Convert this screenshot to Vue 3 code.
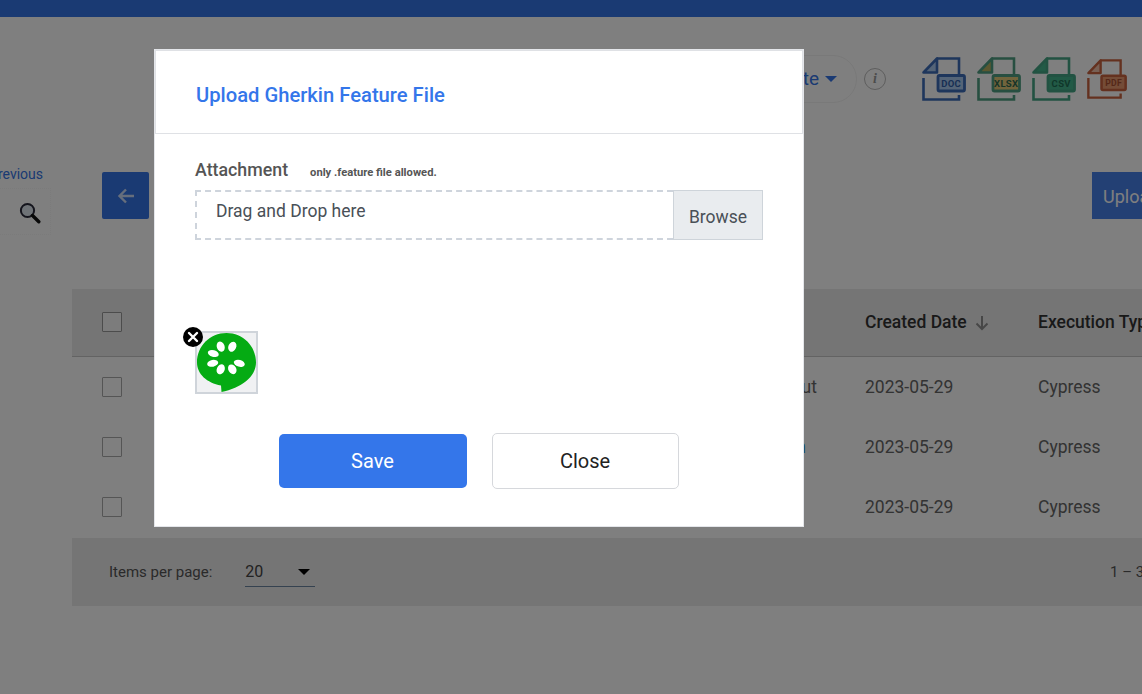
<template>
  <div class="page">
    <div class="topbar"><span class="topbar-text">Validations</span></div>

    <div class="toolbar">
      <div class="translate"><span class="translate-text">Translate</span> <span class="caret"></span></div>
      <span class="info">i</span>
      <div class="file-icons">
        <svg v-for="f in fileIcons" :key="f.label" class="file-icon" :class="f.cls" width="44" height="44" viewBox="0 0 44 44" fill="none">
          <path d="M15 1.5 H37 V18" :stroke="f.color" stroke-width="2.6" />
          <path d="M1.5 15.5 L15 1.5 V15.5 Z" :fill="f.fold" :stroke="f.color" stroke-width="2.6" stroke-linejoin="round" />
          <path d="M1.5 21 V42.5 H37 V38" :stroke="f.color" stroke-width="2.6" />
          <rect x="16" y="18.5" width="26.5" height="15.5" rx="1.5" :fill="f.fill" :stroke="f.color" stroke-width="2.8" />
          <text x="29.2" y="29.7" text-anchor="middle" class="file-label" :fill="f.text">{{ f.label }}</text>
        </svg>
      </div>
    </div>

    <div class="search-row">
      <div class="prev">
        <span class="prev-text">Previous</span>
        <div class="search-box">
          <svg class="search-icon" width="22" height="22" viewBox="0 0 22 22" fill="none">
            <circle cx="8.5" cy="8.5" r="6.6" fill="#dfe6ee" stroke="#2a2a3a" stroke-width="2" />
            <path d="M13.5 13.5 L19.8 19.8" stroke="#111" stroke-width="3.4" stroke-linecap="round" />
          </svg>
        </div>
      </div>
      <button class="back">
        <svg width="18" height="16" viewBox="0 0 18 16" fill="none">
          <path d="M9 1.5 L2.5 8 L9 14.5 M3 8 H17" stroke="#fff" stroke-width="2.4" opacity="0.75" />
        </svg>
      </button>
      <div class="spacer"></div>
      <button class="upload">Upload</button>
    </div>

    <div class="table">
      <div class="row head">
        <span class="check"></span>
        <span class="col-name"></span>
        <span class="col-date">
          Created Date
          <svg class="sort-arrow" width="14" height="16" viewBox="0 0 14 16" fill="none">
            <path d="M7 1 V14 M1.5 8.5 L7 14 L12.5 8.5" stroke="#8f8f8f" stroke-width="2" />
          </svg>
        </span>
        <span class="col-type">Execution Type</span>
      </div>
      <div v-for="(r, i) in rows" :key="i" class="row">
        <span class="check"></span>
        <span class="col-name" :class="r.cls">{{ r.name }}</span>
        <span class="col-date">{{ r.date }}</span>
        <span class="col-type">{{ r.type }}</span>
      </div>
      <div class="table-foot">
        <span class="per-page">Items per page:</span>
        <div class="per-select"><span>20</span><span class="select-caret"></span></div>
        <span class="range">1 – 3 of 3</span>
      </div>
    </div>

    <div class="overlay"></div>

    <div class="modal">
      <div class="modal-head">Upload Gherkin Feature File</div>
      <div class="modal-body">
        <div class="attach-label">
          <span class="attach-title">Attachment</span>
          <span class="attach-note">only .feature file allowed.</span>
        </div>
        <div class="drop">
          <div class="drop-zone">Drag and Drop here</div>
          <div class="browse">Browse</div>
        </div>
        <div class="thumb">
          <svg width="59" height="59" viewBox="0 0 59 59">
            <path d="M29.5 0C46 0 59 13 59 29.5C59 44 44 55 24.5 59L24 52.5C10 50 0 41 0 29.5C0 13 13 0 29.5 0Z" fill="#05ab13" />
            <g fill="#fff">
              <ellipse cx="23.7" cy="13.7" rx="3.9" ry="5.2" transform="rotate(-20 23.7 13.7)" />
              <ellipse cx="35.3" cy="13.7" rx="3.9" ry="5.2" transform="rotate(25 35.3 13.7)" />
              <ellipse cx="16.3" cy="20.5" rx="5.6" ry="3.4" transform="rotate(15 16.3 20.5)" />
              <ellipse cx="15.7" cy="30.3" rx="5.6" ry="3.4" transform="rotate(-12 15.7 30.3)" />
              <ellipse cx="42.3" cy="30.3" rx="5.6" ry="3.4" transform="rotate(15 42.3 30.3)" />
              <ellipse cx="23.7" cy="36.3" rx="3.9" ry="5.2" transform="rotate(25 23.7 36.3)" />
              <ellipse cx="35.3" cy="36.3" rx="3.9" ry="5.2" transform="rotate(-30 35.3 36.3)" />
            </g>
          </svg>
          <span class="remove">
            <svg width="20" height="20" viewBox="0 0 20 20">
              <circle cx="10" cy="10" r="10" fill="#000" />
              <path d="M6 6 L14 14 M14 6 L6 14" stroke="#fff" stroke-width="2.4" stroke-linecap="round" />
            </svg>
          </span>
        </div>
        <div class="actions">
          <button class="save">Save</button>
          <button class="close">Close</button>
        </div>
      </div>
    </div>
  </div>
</template>

<script setup>
const fileIcons = [
  { label: "DOC", color: "#3c6cb8", fold: "#a9c8ee", fill: "#a9c8ee", text: "#2f5ea8", cls: "" },
  { label: "XLSX", color: "#4f9f82", fold: "#b8b060", fill: "#e2c878", text: "#2f6a50", cls: "" },
  { label: "CSV", color: "#45a584", fold: "#45b58c", fill: "#45b58c", text: "#1f6f55", cls: "" },
  { label: "PDF", color: "#c9623f", fold: "#f0c0a8", fill: "#e8986f", text: "#a84f32", cls: "small" },
]

const rows = [
  { name: "Checkout", cls: "", date: "2023-05-29", type: "Cypress" },
  { name: "Login", cls: "link", date: "2023-05-29", type: "Cypress" },
  { name: "Search", cls: "hidden", date: "2023-05-29", type: "Cypress" },
]
</script>

<style>
html,
body {
  margin: 0;
  overflow: hidden;
}
</style>

<style scoped>
.page {
  position: relative;
  width: 1142px;
  height: 694px;
  overflow: hidden;
  background: #fff;
  font-family: Roboto, "Liberation Sans", sans-serif;
  color: #555;
}

.topbar {
  height: 17px;
  background: #3474e6;
  overflow: hidden;
}

.topbar-text {
  display: block;
  margin-top: -14px;
  font-size: 14px;
  line-height: 16px;
  font-weight: 500;
  color: #dfe8f8;
}

.toolbar {
  display: flex;
  align-items: center;
  height: 48px;
  margin-top: 38px;
  padding-left: 700px;
}

.translate {
  display: flex;
  align-items: center;
  justify-content: flex-end;
  gap: 6px;
  width: 157px;
  height: 48px;
  box-sizing: border-box;
  padding-right: 19px;
  border: 1px solid #f2f2f2;
  border-radius: 24px;
  font-size: 19px;
  color: #3474e6;
}

.translate-text {
  margin-bottom: 2px;
}

.caret {
  border-left: 6px solid transparent;
  border-right: 6px solid transparent;
  border-top: 6px solid #3474e6;
}

.info {
  width: 20px;
  height: 20px;
  margin-left: 7px;
  border: 1px solid #bbb;
  border-radius: 50%;
  font: italic 700 14px/20px "Liberation Serif", serif;
  text-align: center;
  color: #999;
}

.file-icons {
  display: flex;
  gap: 11px;
  margin-left: 36px;
  height: 44px;
  margin-top: -1px;
}

.file-icon {
  flex: none;
}

.file-icon.small {
  width: 40px;
  height: 40px;
  margin-top: 2px;
}

.file-label {
  font-size: 9.5px;
  font-weight: 700;
  font-family: Roboto, sans-serif;
  letter-spacing: 0.3px;
}

.search-row {
  display: flex;
  align-items: flex-start;
  height: 123px;
  margin-top: 63px;
}

.prev {
  display: flex;
  flex-direction: column;
  align-items: flex-end;
  flex: none;
  width: 51px;
  margin-right: 51px;
  overflow: hidden;
  white-space: nowrap;
  font-size: 14px;
  color: #3474e6;
}

.prev-text {
  flex: none;
  line-height: 16px;
  margin-right: 8px;
}

.search-box {
  display: flex;
  justify-content: flex-end;
  align-self: stretch;
  height: 47px;
  box-sizing: border-box;
  margin-top: 6px;
  border: 1px dotted #f6f6f6;
  border-left: none;
}

.search-icon {
  margin: 13px 9px 0 0;
}

.back {
  display: flex;
  align-items: center;
  justify-content: center;
  width: 47px;
  height: 47px;
  margin-top: 6px;
  padding: 0;
  border: none;
  border-radius: 2px;
  background: #3474e6;
}

.spacer {
  flex: 1;
}

.upload {
  width: 50px;
  height: 47px;
  margin-top: 6px;
  padding: 2px 0 0 11px;
  border: none;
  background: #3474e6;
  color: #fff;
  opacity: 0.9;
  font: 18px Roboto, sans-serif;
  text-align: left;
  overflow: hidden;
  white-space: nowrap;
}

.table {
  margin-left: 72px;
}

.row {
  display: flex;
  align-items: center;
  height: 60px;
  padding-left: 30px;
  font-size: 17.5px;
  color: #666;
}

.row.head {
  height: 68px;
  box-sizing: border-box;
  padding-bottom: 1px;
  background: #ebebeb;
  border-bottom: 1px solid #c6c6c6;
  font-weight: 500;
  color: #333;
}

.check {
  flex: none;
  width: 18px;
  height: 18px;
  border: 1px solid #aaa;
  border-radius: 1px;
}

.head .check {
  background: #f8f8f8;
  border-color: #999;
}

.col-name {
  flex: none;
  width: 743px;
  box-sizing: border-box;
  padding-right: 48px;
  text-align: right;
}

.col-name.link {
  padding-right: 59px;
  color: #2a8fd8;
}

.col-name.hidden {
  padding-right: 120px;
}

.col-date {
  display: flex;
  align-items: center;
  gap: 8px;
  flex: none;
  width: 173px;
}

.sort-arrow {
  flex: none;
  margin-top: 1px;
}

.col-type {
  flex: none;
  white-space: nowrap;
}

.table-foot {
  display: flex;
  align-items: center;
  height: 68px;
  margin-top: 1px;
  padding-left: 37px;
  background: #ebebeb;
  font-size: 15px;
  color: #555;
}

.per-select {
  display: flex;
  justify-content: space-between;
  align-items: center;
  width: 70px;
  height: 29px;
  box-sizing: border-box;
  margin-left: 33px;
  border-bottom: 1px solid #6a85a0;
  font-size: 16px;
  color: #444;
}

.select-caret {
  margin-right: 5px;
  border-left: 6px solid transparent;
  border-right: 6px solid transparent;
  border-top: 6px solid #000;
}

.range {
  margin-left: auto;
  width: 32px;
  white-space: nowrap;
}

.overlay {
  position: absolute;
  inset: 0;
  background: rgba(0, 0, 0, 0.5);
}

.modal {
  position: absolute;
  top: 49px;
  left: 154px;
  width: 650px;
  height: 478px;
  box-sizing: border-box;
  background: #fff;
  border: 1px solid #e4e6ea;
}

.modal-head {
  height: 84px;
  box-sizing: border-box;
  padding: 32px 0 0 40px;
  border: 1px solid #dfe1e5;
  font-size: 20.2px;
  font-weight: 500;
  line-height: 24px;
  color: #3476ea;
}

.modal-body {
  padding: 24px 40px 0;
}

.attach-label {
  display: flex;
  align-items: center;
  height: 24px;
}

.attach-title {
  margin-bottom: 2px;
  font-size: 17.8px;
  font-weight: 500;
  color: #555;
}

.attach-note {
  margin-left: 22px;
  margin-top: 4px;
  font-size: 11.2px;
  font-weight: 700;
  color: #555;
}

.drop {
  display: flex;
  width: 568px;
  height: 50px;
  margin-top: 8px;
}

.drop-zone {
  flex: 1;
  box-sizing: border-box;
  padding: 7px 0 0 19px;
  border: 2px dashed #ced4dc;
  border-right: none;
  font-size: 17.5px;
  line-height: 24px;
  color: #495057;
}

.browse {
  width: 90px;
  box-sizing: border-box;
  border: 1px solid #ced4da;
  background: #e9ecef;
  font-size: 17.5px;
  line-height: 52px;
  text-align: center;
  color: #495057;
}

.thumb {
  position: relative;
  width: 63px;
  height: 63px;
  box-sizing: border-box;
  margin-top: 91px;
  border: 2px solid #cfd4da;
  background: #f0f1f3;
}

.thumb svg {
  display: block;
}

.remove {
  position: absolute;
  top: -6px;
  left: -14px;
}

.actions {
  display: flex;
  justify-content: center;
  align-items: center;
  gap: 25px;
  height: 56px;
  margin-top: 39px;
  padding-right: 1px;
}

.save,
.close {
  border-radius: 5px;
  font: 400 20px Roboto, sans-serif;
}

.save {
  width: 188px;
  height: 54px;
  border: none;
  background: #3476ea;
  color: #fff;
}

.close {
  width: 187px;
  height: 56px;
  border: 1px solid #d6d8dc;
  background: #fff;
  color: #222;
}
</style>
